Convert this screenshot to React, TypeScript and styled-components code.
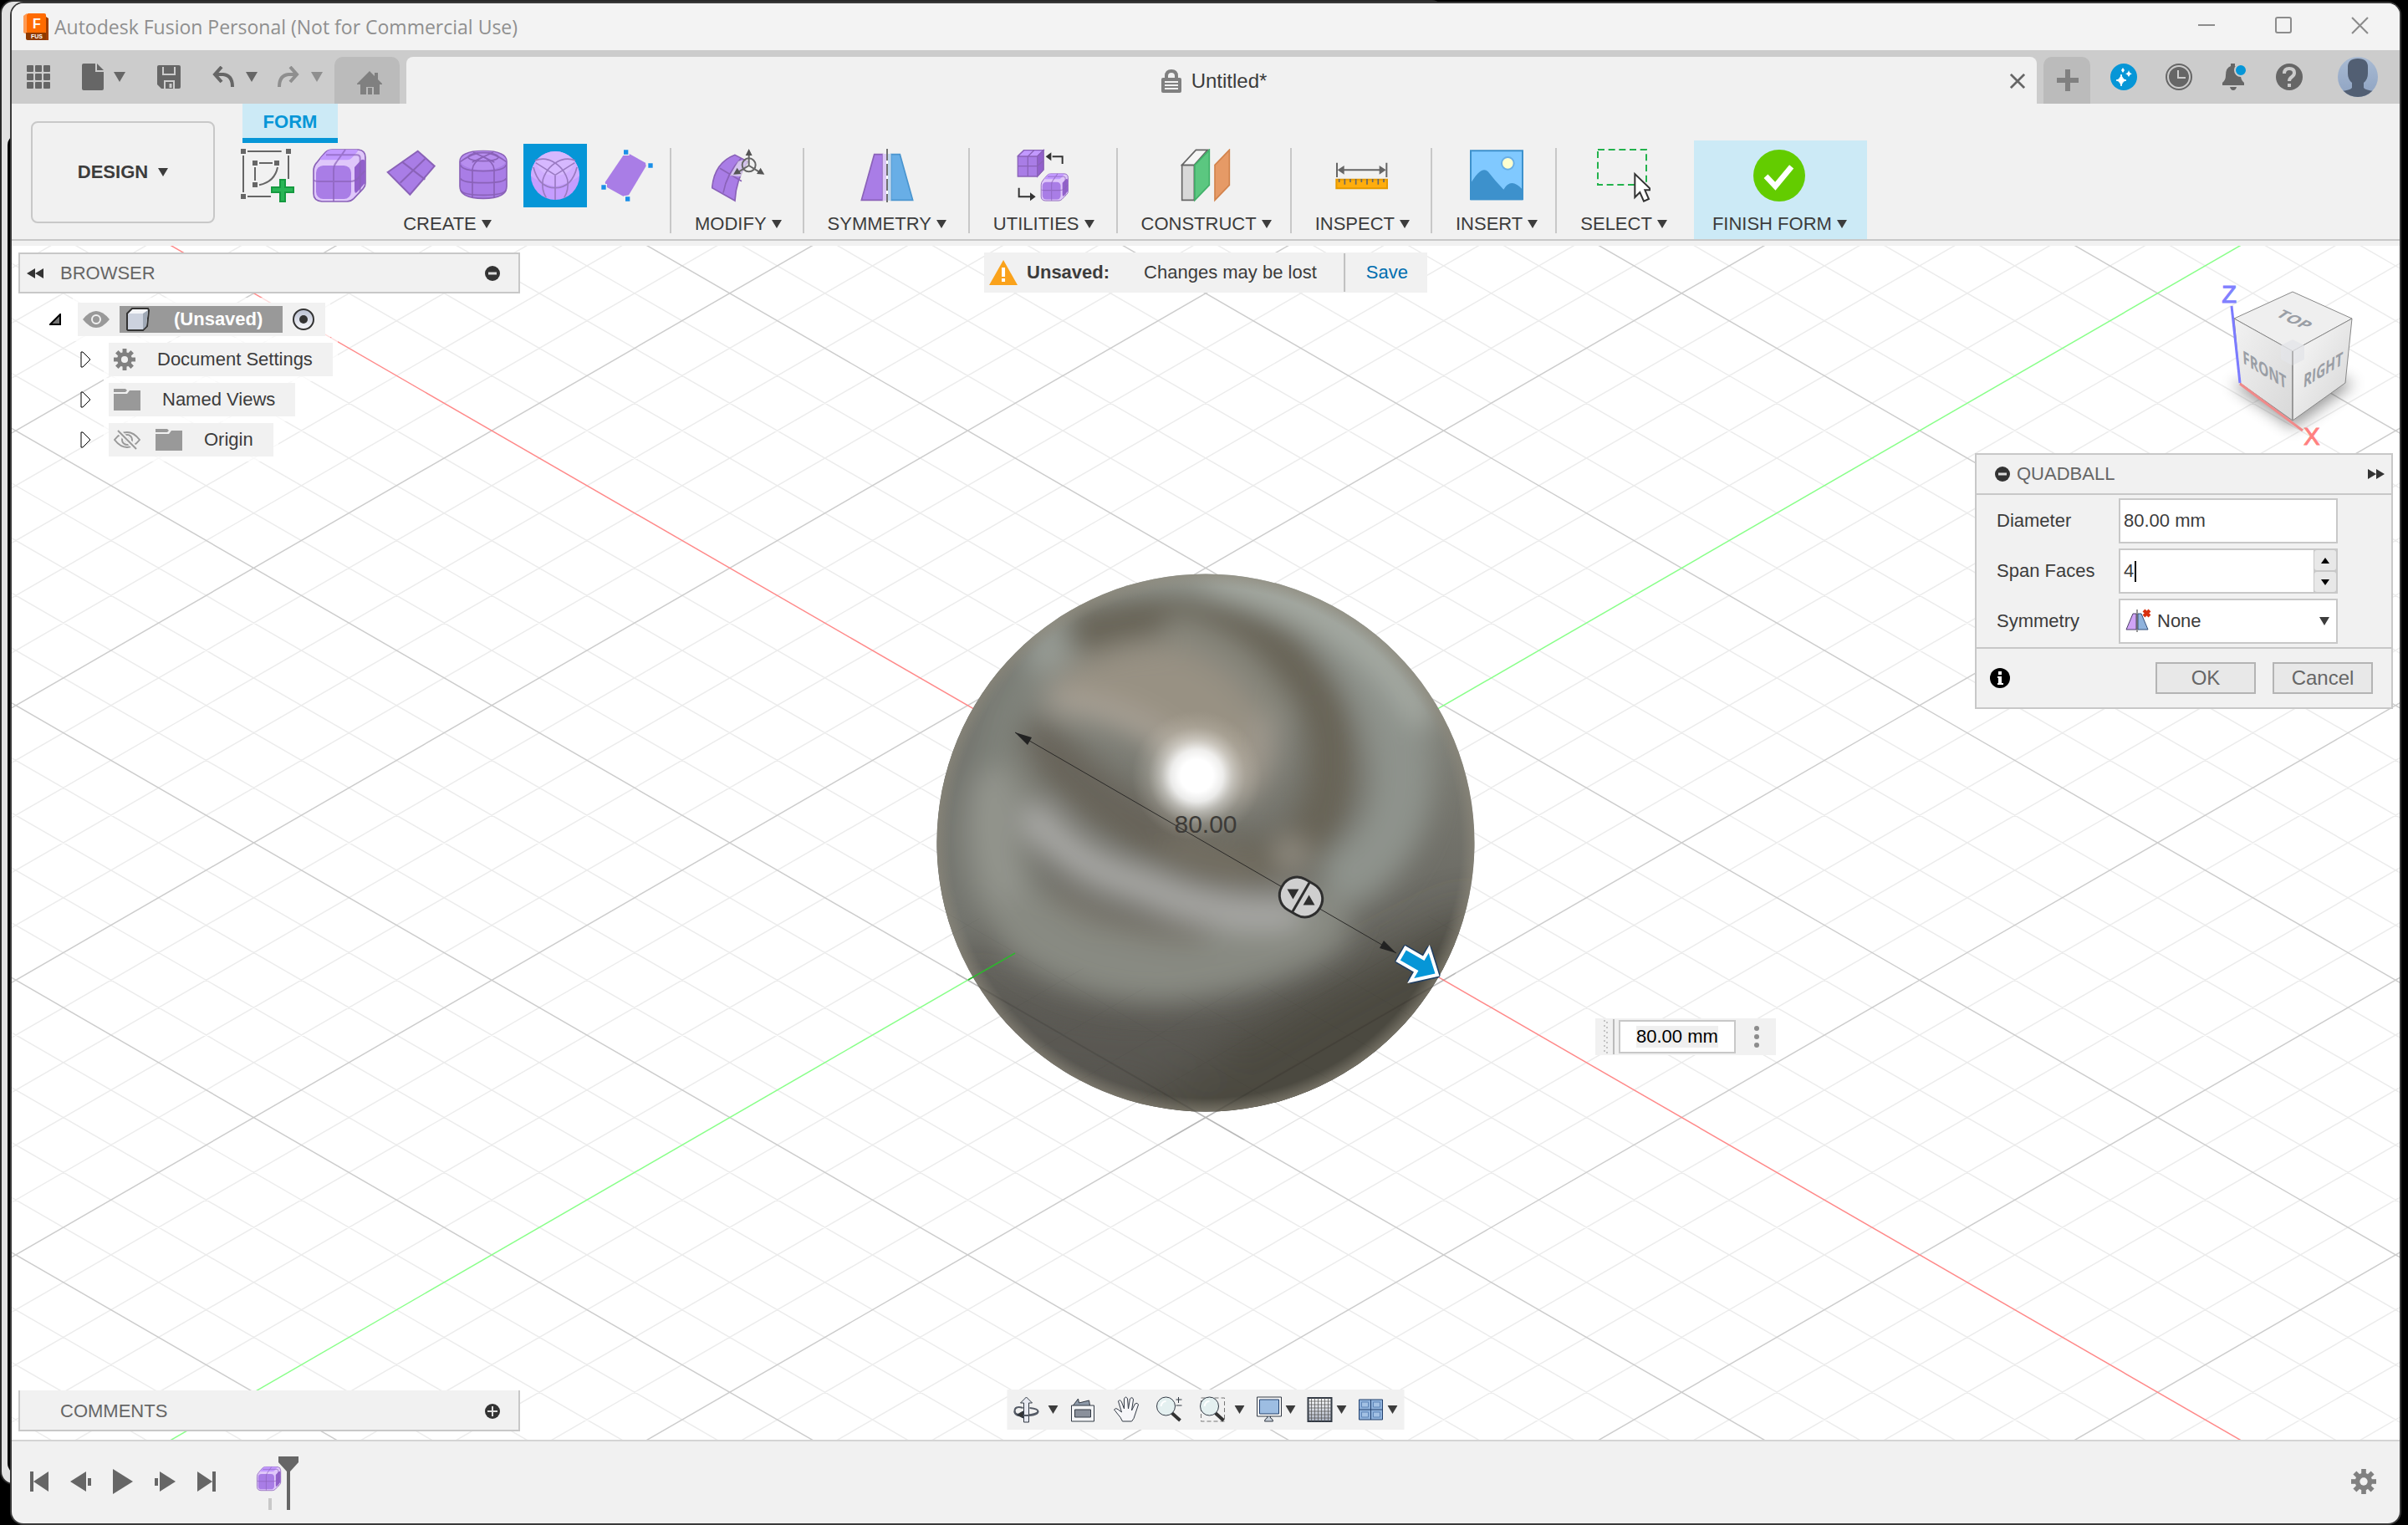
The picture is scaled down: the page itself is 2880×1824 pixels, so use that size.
import React from "react";
import styled, { createGlobalStyle, css } from "styled-components";

const GlobalStyle = createGlobalStyle`
  *, *::before, *::after { box-sizing: border-box; }
  body { margin: 0; background: #000; }
  body, button, input, select {
    font-family: "Liberation Sans", Arial, sans-serif;
    font-size: 22px;
    line-height: 28px;
    color: #3c3c3c;
  }
  button { border: 0; padding: 0; background: none; cursor: pointer; }
  svg { display: block; flex: none; }
`;

/* ---------- desktop and windows ---------- */

const Desktop = styled.div`
  position: relative;
  height: 100vh;
  padding: 4px 10px 2px 14px;
  background: #000;
  overflow: hidden;
`;

const BackWindow = styled.div`
  position: absolute;
  left: 0;
  top: 0;
  width: 60%;
  height: calc(100vh - 48px);
  background: #e2e2e2;
  border: 2px solid #2a2a2a;
  border-radius: 16px;
`;

const MiddleWindow = styled.div`
  position: absolute;
  left: 9px;
  top: 160px;
  width: 50%;
  height: calc(100vh - 220px);
  background: #000;
  border-radius: 14px;
`;

const Window = styled.div`
  position: relative;
  height: 100%;
  display: flex;
  flex-direction: column;
  background: #f1f1f1;
  border-radius: 14px;
  overflow: hidden;
  box-shadow: 0 0 0 2px #3a3a3a;
`;

const TitleBar = styled.header`
  height: 56px;
  display: flex;
  align-items: center;
  padding: 0 36px 0 14px;
  background: #f3f3f3;
  color: #8f8f8f;
`;

const TitleText = styled.h1`
  flex: 1;
  margin: 0 0 0 7px;
  font: 400 23px/32px "Open Sans", "Noto Sans", sans-serif;
`;

const WindowButtons = styled.div`
  display: flex;
  gap: 70px;
`;

const WindowButton = styled.button`
  width: 22px;
  height: 22px;
  margin-bottom: 4px;
  color: #8c8c8c;
`;

/* ---------- tab bar ---------- */

const TabBar = styled.div`
  height: 64px;
  display: flex;
  align-items: flex-end;
  background: #ccc;
  color: #666;
`;

const QuickActions = styled.div`
  align-self: stretch;
  display: flex;
  align-items: center;
  gap: 38px;
  padding: 0 14px 0 18px;
`;

const QuickButton = styled.button<{ $faded?: boolean }>`
  display: flex;
  align-items: center;
  gap: 12px;
  color: ${(p) => (p.$faded ? "#8f8f8f" : "#666")};
`;

const History = styled.div`
  display: flex;
  gap: 24px;

  ${QuickButton} {
    gap: 14px;
  }
`;

const StubTab = styled.button<{ $wide?: boolean }>`
  width: ${(p) => (p.$wide ? 78 : 56)}px;
  height: 56px;
  display: flex;
  align-items: center;
  justify-content: center;
  background: #bbb;
  border-radius: 10px 10px 0 0;
  color: #808080;
  padding: ${(p) => (p.$wide ? "6px 0 0 5px" : "0 0 0 2px")};
`;

const DocumentTab = styled.div`
  flex: 1;
  height: 56px;
  margin: 0 8px;
  padding: 2px 14px 0;
  display: flex;
  align-items: center;
  background: #f1f1f1;
  border-radius: 8px 8px 0 0;
`;

const DocumentName = styled.div`
  flex: 1;
  display: flex;
  align-items: center;
  justify-content: center;
  gap: 12px;
  font-size: 24px;
  color: #3c3c3c;
`;

const AccountBar = styled.div`
  align-self: stretch;
  display: flex;
  align-items: center;
  gap: 34px;
  padding: 0 26px 0 24px;
`;

const AccountButton = styled.button<{ $last?: boolean }>`
  margin-left: ${(p) => (p.$last ? 8 : 0)}px;
`;

/* ---------- ribbon ---------- */

const Ribbon = styled.div`
  height: 164px;
  display: flex;
  padding-left: 23px;
  border-bottom: 2px solid #c8c8c8;
`;

const WorkspaceButton = styled.button`
  width: 220px;
  height: 122px;
  margin: 21px 25px 0 0;
  display: flex;
  align-items: center;
  justify-content: center;
  gap: 12px;
  border: 2px solid #c8c8c8;
  border-radius: 8px;
  font-weight: 700;
`;

const RibbonBody = styled.div`
  display: flex;
  flex-direction: column;
`;

const RibbonTabs = styled.div`
  height: 44px;
  padding-left: 8px;
`;

const RibbonTab = styled.button`
  width: 114px;
  height: 47px;
  padding-top: 2px;
  background: #cceaf6;
  border-bottom: 6px solid #0696d7;
  color: #0696d7;
  font-weight: 700;
`;

const Groups = styled.div`
  flex: 1;
  display: flex;
`;

const Group = styled.section<{ $finish?: boolean; $end?: number }>`
  display: flex;
  flex-direction: column;
  align-items: center;
  padding: 4px ${(p) => p.$end ?? 26}px 0 28px;
  ${(p) =>
    p.$finish &&
    css`
      background: #cceaf6;
      padding: 4px 24px 0 22px;
    `}
`;

const CreateGroup = styled(Group)`
  padding: 4px 13px 0 0;
`;

const Tools = styled.div`
  display: flex;
  gap: 10px;
`;

const Tool = styled.button<{ $active?: boolean }>`
  width: 76px;
  height: 76px;
  display: flex;
  align-items: center;
  justify-content: center;
  background: ${(p) => (p.$active ? "#0696d7" : "transparent")};
`;

const GroupLabel = styled.button`
  display: flex;
  align-items: center;
  gap: 6px;
  margin-top: 6px;
  white-space: nowrap;
`;

const Divider = styled.div`
  width: 2px;
  height: 102px;
  margin-top: 9px;
  background: #c8c8c8;
`;

/* ---------- canvas ---------- */

const Canvas = styled.main`
  position: relative;
  flex: 1;
  margin-top: 6px;
  background: #fff;
  overflow: hidden;
`;

const Scene = styled.svg`
  position: absolute;
  inset: 0;
  width: 100%;
  height: 100%;
`;

const LeftDock = styled.div`
  position: absolute;
  left: 8px;
  top: 8px;
  bottom: 10px;
  width: 600px;
  display: flex;
  flex-direction: column;
  justify-content: space-between;
`;

const DockHeader = styled.div<{ $open?: boolean }>`
  height: 49px;
  display: flex;
  align-items: center;
  padding: ${(p) => (p.$open ? "0 21px 0 8px" : "2px 21px 0 8px")};
  gap: 20px;
  background: #f1f1f1;
  border: 2px solid #c8c8c8;
  border-width: ${(p) => (p.$open ? "2px" : "0 2px 2px 2px")};
  color: #666;
`;

const DockTitle = styled.h2`
  flex: 1;
  margin: 0;
  font-size: 22px;
  font-weight: 400;
`;

const Spacer = styled.span`
  width: 20px;
`;

const Tree = styled.ul`
  list-style: none;
  margin: 11px 0 0;
  padding: 0;
  display: flex;
  flex-direction: column;
  gap: 8px;
`;

const TreeRow = styled.li<{ $root?: boolean }>`
  display: flex;
  align-items: center;
  height: 40px;
  gap: 18px;
  padding-left: ${(p) => (p.$root ? 37 : 74)}px;
`;

const TreeToggle = styled.button`
  width: 16px;
  height: 24px;
`;

const TreeItem = styled.div<{ $root?: boolean }>`
  height: 40px;
  display: flex;
  align-items: center;
  gap: ${(p) => (p.$root ? 12 : 18)}px;
  padding: ${(p) => (p.$root ? "0 12px 0 6px" : "0 24px 0 6px")};
  background: #f1f1f1;
  box-shadow: 0 0 0 6px rgba(255, 255, 255, 0.7);
`;

const TreeLabel = styled.span`
  padding-left: 8px;
`;

const RootLabel = styled.span`
  height: 32px;
  display: flex;
  align-items: center;
  gap: 29px;
  padding: 0 24px 0 8px;
  background: #999;
  color: #fff;
  font-weight: 700;
`;

const Notice = styled.div`
  position: absolute;
  top: 8px;
  left: 50%;
  transform: translateX(-50%);
  height: 48px;
  display: flex;
  align-items: center;
  background: #f1f1f1;
  padding: 0 23px 0 6px;
  white-space: nowrap;
`;

const NoticeTitle = styled.strong`
  margin: 0 41px 0 11px;
`;

const NoticeLink = styled.a`
  height: 46px;
  line-height: 46px;
  margin-left: 32px;
  padding-left: 25px;
  border-left: 2px solid #c0c0c0;
  color: #006eaf;
  text-decoration: none;
`;

const CubeHolder = styled.div`
  position: absolute;
  right: 32px;
  top: 40px;
`;

/* ---------- feature dialog ---------- */

const Dialog = styled.form`
  position: absolute;
  right: 8px;
  top: 248px;
  width: 500px;
  background: #f1f1f1;
  border: 2px solid #c8c8c8;
`;

const DialogHeader = styled.div`
  height: 48px;
  display: flex;
  align-items: center;
  gap: 7px;
  padding: 0 8px 0 21px;
  border-bottom: 2px solid #c8c8c8;
  color: #666;
`;

const Fields = styled.div`
  display: grid;
  grid-template-columns: 146px 262px;
  row-gap: 6px;
  align-items: center;
  padding: 4px 0 4px 24px;
`;

const FieldBox = styled.div`
  position: relative;
  display: flex;
  height: 54px;
  background: #fff;
  border: 2px solid #c8c8c8;
`;

const TextField = styled.input`
  width: 100%;
  border: 0;
  padding: 0 0 0 4px;
  background: transparent;
  outline: 0;
`;

const TextCursor = styled.span`
  position: absolute;
  left: 17px;
  top: 13px;
  width: 2px;
  height: 25px;
  background: #000;
`;

const Stepper = styled.div`
  width: 27px;
  flex: none;
  display: flex;
  flex-direction: column;
  gap: 2px;
  background: #c8c8c8;
  border-left: 1px solid #c8c8c8;
`;

const StepButton = styled.button`
  flex: 1;
  display: flex;
  align-items: center;
  justify-content: center;
  background: #e8e8e8;
  border-radius: 3px;
  color: #000;
`;

const SelectField = styled.select`
  width: 100%;
  appearance: none;
  border: 0;
  padding: 0 0 0 44px;
  background: transparent;
  outline: 0;
`;

const SelectIcon = styled.span`
  position: absolute;
  left: 6px;
  top: 10px;
  pointer-events: none;
`;

const SelectCaret = styled.span`
  position: absolute;
  right: 8px;
  top: 20px;
  pointer-events: none;
`;

const DialogFooter = styled.div`
  height: 72px;
  display: flex;
  align-items: center;
  gap: 20px;
  padding: 0 22px 0 15px;
  border-top: 2px solid #c8c8c8;
`;

const DialogButton = styled.button`
  width: 120px;
  height: 38px;
  border: 2px solid #b4b4b4;
  background: #e8e8e8;
  font-size: 24px;
  line-height: 32px;
  color: #666;
`;

const Grow = styled.span`
  flex: 1;
`;

/* ---------- floating dimension input ---------- */

const DimensionBar = styled.div`
  position: absolute;
  left: calc(50% + 466px);
  top: calc(50% + 210px);
  height: 44px;
  display: flex;
  align-items: center;
  gap: 5px;
  padding: 0 20px 0 9px;
  background: #f1f1f1;
`;

const Rule = styled.span`
  width: 2px;
  height: 42px;
  background: #bbb;
`;

const DimensionBox = styled.div`
  width: 140px;
  height: 40px;
  display: flex;
  align-items: center;
  justify-content: center;
  margin-right: 17px;
  background: #fff;
  border: 2px solid #c8c8c8;
`;

const DimensionInput = styled.input`
  width: 98px;
  height: 26px;
  border: 0;
  padding: 0;
  background: #efefef;
  color: #000;
  outline: 0;
`;

/* ---------- bottom bars ---------- */

const NavBar = styled.nav`
  position: absolute;
  left: 50%;
  bottom: 12px;
  transform: translateX(-50%);
  height: 48px;
  display: flex;
  align-items: center;
  gap: 13px;
  padding: 0 8px 0 7px;
  background: #f1f1f1;
`;

const NavButton = styled.button<{ $plain?: boolean; $tight?: boolean }>`
  display: flex;
  align-items: center;
  gap: ${(p) => (p.$tight ? 4 : 10)}px;
  margin-right: ${(p) => (p.$plain ? 7 : 0)}px;
`;

const Timeline = styled.footer`
  height: 100px;
  display: flex;
  align-items: center;
  padding: 0 28px 2px 19px;
  border-top: 2px solid #d4d4d4;
  color: #666;
`;

const Transport = styled.div`
  display: flex;
  gap: 22px;
  margin-right: 42px;
`;

const TransportButton = styled.button`
  width: 28px;
  height: 36px;
  color: #666;
`;

/* ---------- small icons ---------- */

const Caret = ({ size = 12, color = "#3c3c3c" }: { size?: number; color?: string }) => (
  <svg width={size} height={size - 2} viewBox="0 0 12 10" preserveAspectRatio="none">
    <path d="M0 0h12l-6 10z" fill={color} />
  </svg>
);

const DoubleArrow = ({ flip }: { flip?: boolean }) => (
  <svg width="20" height="12" viewBox="0 0 20 12">
    <path
      d="M10 0v12L0 6zM20 0v12L10 6z"
      fill="#333"
      transform={flip ? "matrix(-1 0 0 1 20 0)" : undefined}
    />
  </svg>
);

const RoundSign = ({ plus }: { plus?: boolean }) => (
  <svg width="20" height="20" viewBox="0 0 20 20">
    <circle cx="10" cy="10" r="9" fill="#333" />
    <path d={plus ? "M4 10h12M10 4v12" : "M5 10h10"} stroke="#ddd" strokeWidth={plus ? 2 : 3} />
  </svg>
);

const AppLogo = () => (
  <svg width="30" height="32" viewBox="0 0 30 32">
    <path d="M0 3l4-3v25l-4-2z" fill="#ff9a52" />
    <rect x="4" width="23" height="24" rx="2" fill="#ff6b00" />
    <path d="M27 4l3 2v26H27z" fill="#a13f00" />
    <path d="M3 23h24v9H5q-2 0-2-2z" fill="#8f3a00" />
    <text x="16" y="18" textAnchor="middle" fontSize="16" fontWeight="700" fill="#fff">F</text>
    <text x="16" y="30" textAnchor="middle" fontSize="7" fontWeight="700" fill="#fff">FUS</text>
  </svg>
);

const AppsIcon = () => (
  <svg width="28" height="28" viewBox="0 0 28 28" fill="currentColor">
    {[0, 10, 20].map((y) =>
      [0, 10, 20].map((x) => <rect key={`${x}-${y}`} x={x} y={y} width="8" height="8" rx="1" />)
    )}
  </svg>
);

const FileIcon = () => (
  <svg width="26" height="32" viewBox="0 0 26 32" fill="currentColor">
    <path d="M2 0h14v10h10v20q0 2-2 2H2q-2 0-2-2V2q0-2 2-2z" />
    <path d="M18 0l8 8h-8z" />
  </svg>
);

const SaveIcon = () => (
  <svg width="28" height="28" viewBox="0 0 28 28">
    <path d="M2 0h24q2 0 2 2v24q0 2-2 2H5l-5-5V2q0-2 2-2z" fill="currentColor" />
    <path d="M7 2v9h14V2M9 28v-9h11v9" fill="none" stroke="#ccc" strokeWidth="2" />
    <path d="M16 22v5" stroke="#ccc" strokeWidth="3" />
  </svg>
);

const UndoIcon = ({ flip }: { flip?: boolean }) => (
  <svg width="26" height="26" viewBox="0 0 26 26">
    <g
      transform={flip ? "matrix(-1 0 0 1 26 0)" : undefined}
      fill="none"
      stroke="currentColor"
      strokeWidth="4"
    >
      <path d="M11 1L3 10l8 9" />
      <path d="M3 10h10q11 1 11 15" />
    </g>
  </svg>
);

const HomeIcon = () => (
  <svg width="30" height="28" viewBox="0 0 30 28" fill="currentColor">
    <path d="M15 0l6 6V2h4v8l5 5v1h-3v12h-7v-9h-9v9H4V16H0v-1z" />
    <path d="M13 20h5v8h-5z" />
  </svg>
);

const LockIcon = () => (
  <svg width="24" height="28" viewBox="0 0 24 28">
    <path d="M6 12V8q0-6 6-6t6 6v4" fill="none" stroke="#808080" strokeWidth="4" />
    <rect y="10" width="24" height="18" rx="2" fill="#808080" />
    <path d="M4 15h16M4 19h16M4 23h16" stroke="#f1f1f1" strokeWidth="2" />
  </svg>
);

const Cross = ({ size, width }: { size: number; width: number }) => (
  <svg width={size} height={size} viewBox="0 0 20 20">
    <path d="M1 1l18 18M19 1L1 19" stroke="currentColor" strokeWidth={width} />
  </svg>
);

const PlusIcon = () => (
  <svg width="26" height="26" viewBox="0 0 26 26">
    <path d="M13 0v26M0 13h26" stroke="currentColor" strokeWidth="6" />
  </svg>
);

const SparkleIcon = () => (
  <svg width="32" height="32" viewBox="0 0 32 32">
    <circle cx="16" cy="16" r="16" fill="#0696d7" />
    <path d="M13 13q1 6 6 7q-5 1-6 7q-1-6-6-7q5-1 6-7z" fill="#fff" stroke="#fff" />
    <path d="M22 8q1 4 4 4q-3 1-4 4q-1-3-4-4q3 0 4-4zM15 5l2 3-2 3-2-3z" fill="#fff" />
  </svg>
);

const ClockIcon = () => (
  <svg width="32" height="32" viewBox="0 0 32 32">
    <circle cx="16" cy="16" r="15" fill="none" stroke="#666" strokeWidth="2" />
    <circle cx="16" cy="16" r="12" fill="#666" />
    <path d="M15 8v9h9" fill="none" stroke="#ccc" strokeWidth="2" />
  </svg>
);

const BellIcon = () => (
  <svg width="32" height="32" viewBox="0 0 32 32">
    <path d="M12 0h5v3q7 2 7 11 0 6 4 9v3H2v-3q4-3 4-9 0-9 6-11zM11 28h8q-1 4-4 4t-4-4z" fill="#666" />
    <circle cx="24" cy="8" r="7" fill="#0696d7" stroke="#ccc" strokeWidth="2" />
  </svg>
);

const HelpIcon = () => (
  <svg width="32" height="32" viewBox="0 0 32 32">
    <circle cx="16" cy="16" r="16" fill="#666" />
    <path d="M10 12q0-6 6-6t6 5q0 3-3 5t-3 5" fill="none" stroke="#ccc" strokeWidth="4" />
    <path d="M14 24h4v4h-4z" fill="#ccc" />
  </svg>
);

const Avatar = () => (
  <svg width="48" height="48" viewBox="0 0 48 48">
    <defs>
      <linearGradient id="sky" x2="0" y2="1">
        <stop stopColor="#a9bbd3" />
        <stop offset="1" stopColor="#8ea3c2" />
      </linearGradient>
      <clipPath id="face"><circle cx="24" cy="24" r="24" /></clipPath>
    </defs>
    <g clipPath="url(#face)">
      <path d="M0 0h48v48H0z" fill="url(#sky)" />
      <path d="M12 12Q12 2 24 2t12 10v8q0 7-5 11v6q2 3 14 4v8H3v-8q12-1 14-4v-6q-5-4-5-11z" fill="#525f73" />
    </g>
  </svg>
);

/* ---------- ribbon icons, drawn on a 192 unit square ---------- */

const BigIcon = ({ children }: { children: React.ReactNode }) => (
  <svg width="64" height="64" viewBox="0 0 192 192">{children}</svg>
);

const SketchIcon = () => (
  <BigIcon>
    <g fill="none" stroke="#666" strokeWidth="6">
      <path d="M24 9h122M9 24v132M24 171h84M171 24v84M66 51h48M51 66v48" />
      <path d="M66 130Q122 118 132 66" />
    </g>
    <g fill="#666">
      <path d="M0 0h18v18H0zM162 0h18v18h-18zM0 162h18v18H0zM42 42h18v18H42zM120 42h18v18h-18zM42 120h18v18H42z" />
    </g>
    <path d="M141 111h18v27h30v18h-30v33h-18v-33h-30v-18h30z" fill="#29b555" stroke="#159a40" strokeWidth="6" />
  </BigIcon>
);

const RoundedBoxDrawing = () => (
  <>
    <path d="M30 30L46 12Q56 3 70 3h94q25 2 25 28v92q0 12-8 20l-34 36q-10 10-24 10H33Q3 187 3 160V80Q3 62 14 50z" fill="#dfc7fa" stroke="#8a62b8" strokeWidth="5" />
    <rect x="12" y="60" width="126" height="120" rx="26" fill="#a97de6" />
    <path d="M28 34L52 8q4-5 14-5h92q6 2 2 8l-20 22q-6 7-16 7H34q-8 0-6-6z" fill="#c299ff" />
    <path d="M150 66l24-26q14-6 14 12v70l-26 30q-12 16-12-8z" fill="#9260cc" />
    <path d="M3 112q5 5 20 5h110q20 0 30-12l24-26M75 189V78q0-18 10-30l32-45M48 22h110q12 0 12 12v122" fill="none" stroke="#8a62b8" strokeWidth="6" opacity=".7" />
  </>
);

const BoxIcon = () => (
  <BigIcon>
    <RoundedBoxDrawing />
  </BigIcon>
);

const PlaneIcon = () => (
  <BigIcon>
    <g stroke="#8a62b8" strokeWidth="6">
      <path d="M11 84L119 8l60 54-88 102z" fill="#a97de6" />
      <path d="M56 122l89-86M62 46l83 64" fill="none" />
    </g>
  </BigIcon>
);

const CylinderIcon = () => (
  <BigIcon>
    <path d="M12 46Q12 8 96 8t84 38v88q0 44-84 44T12 134z" fill="#a97de6" stroke="#8a62b8" strokeWidth="5" />
    <ellipse cx="96" cy="42" rx="82" ry="34" fill="#b78eef" />
    <g fill="none" stroke="#8a62b8" strokeWidth="5">
      <path d="M14 58Q20 80 96 80t82-22M14 106Q20 122 96 122t82-16M14 148q10 18 82 18t82-18" />
      <path d="M57 176V74q2-26 39-46q37 20 39 46v102" />
      <path d="M40 30q10-16 56-16t56 16q-10 14-56 14T40 30zM60 12l76 36M132 12L56 48" />
      <path d="M14 46q26-20 60-30M178 46q-26-20-60-30" />
    </g>
  </BigIcon>
);

const QuadballIcon = () => (
  <BigIcon>
    <circle cx="96" cy="96" r="87" fill="#c59dff" />
    <path d="M9 96a87 87 0 0 1 174 0q-20 22-87 40Q29 118 9 96z" fill="#d0adff" />
    <path d="M26 46Q56 10 96 9t70 37q-14 50-70 50T26 46z" fill="#dabfff" opacity=".6" />
    <g fill="none" stroke="#9a7bc2" strokeWidth="5">
      <path d="M96 96v87M96 94L26 50M96 94l70-44" />
      <path d="M24 42q24-10 50-2q50 20 66 70 6 38-12 66" />
      <path d="M168 42q-24-10-50-2q-50 20-66 70-6 38 12 66" />
      <path d="M18 66q18 74 78 74t78-74" />
    </g>
  </BigIcon>
);

const FaceIcon = () => (
  <BigIcon>
    <path d="M86 18l14-2 62 34 2 12-62 104-20 4-62-34-3-16z" fill="#a97de6" />
    <g fill="#1a8fe8" stroke="#f1f1f1" strokeWidth="4">
      <path d="M82 2h20v20H82zM170 50h20v20h-20zM2 128h20v20H2zM88 170h20v20H88z" />
    </g>
  </BigIcon>
);

const ModifyIcon = () => (
  <BigIcon>
    <g fill="#a97de6" stroke="#8a62b8" strokeWidth="5">
      <path d="M2 140Q10 50 84 22l46 24Q88 110 84 186z" />
      <path d="M30 70l78 46M42 158Q54 90 106 34" fill="none" />
    </g>
    <path d="M66 96L96 44l36-8 52 60-80 4z" fill="#f1f1f1" opacity=".6" />
    <g fill="none" stroke="#666" strokeWidth="6">
      <ellipse cx="134" cy="58" rx="24" ry="24" />
      <path d="M134 20v40M134 60l-36 22M134 60l36 22" />
    </g>
    <path d="M134 0l12 24h-24zM78 92l14-24 14 22zM190 92l-14-24-14 22z" fill="#555" />
  </BigIcon>
);

const SymmetryIcon = () => (
  <BigIcon>
    <path d="M50 20h30v164H4z" fill="#a97de6" stroke="#8a62b8" strokeWidth="5" />
    <path d="M110 20h32l46 164h-78z" fill="#68aee6" stroke="#4a95cf" strokeWidth="5" />
    <path d="M80 18h16v168H80z" fill="#dcc8f5" />
    <path d="M96 18h14v168H96z" fill="#c0d6ec" />
    <path d="M96 0v192" stroke="#fff" strokeWidth="6" />
    <path d="M96 0v192" stroke="#555" strokeWidth="5" strokeDasharray="42 12" />
  </BigIcon>
);

const UtilitiesIcon = () => (
  <BigIcon>
    <g stroke="#8a62b8" strokeWidth="4">
      <path d="M4 26L26 5h70v70L74 99H4z" fill="#a97de6" />
      <path d="M4 26L26 5h70L74 27H4z" fill="#c299ff" />
      <path d="M74 27L96 5v70L74 99z" fill="#9260cc" />
      <path d="M4 62h70l22-20M40 99V27l22-22" fill="none" />
    </g>
    <g transform="translate(86 88) scale(.52)">
      <RoundedBoxDrawing />
    </g>
    <path d="M164 54V28h-36M8 140v32h40" fill="none" stroke="#333" strokeWidth="6" />
    <path d="M104 28l20-15v30zM68 172l-20-15v30z" fill="#333" />
  </BigIcon>
);

const ConstructIcon = () => (
  <BigIcon>
    <path d="M8 58h44v126H8z" fill="#d8d8d8" stroke="#666" strokeWidth="5" />
    <path d="M8 58L58 4h42L52 58z" fill="#f6f6f6" stroke="#666" strokeWidth="5" />
    <path d="M54 58l52-54v126l-52 54z" fill="#5bc780" stroke="#41b069" strokeWidth="5" />
    <path d="M126 58l52-54v126l-52 54z" fill="#e69a66" stroke="#d2834c" strokeWidth="5" />
  </BigIcon>
);

const InspectIcon = () => (
  <BigIcon>
    <path d="M6 50v52M184 50v52M20 76h150" stroke="#666" strokeWidth="6" fill="none" />
    <path d="M8 76l24-16v32zM182 76l-24-16v32z" fill="#666" />
    <path d="M4 110h182v32H4z" fill="#ffad0d" stroke="#e69a00" strokeWidth="6" />
    <path d="M14 108v12M34 108v20M54 108v12M74 108v20M94 108v12M114 108v20M134 108v12M154 108v20M174 108v12" stroke="#666" strokeWidth="5" />
  </BigIcon>
);

const InsertIcon = () => (
  <BigIcon>
    <path d="M3 7h186v174H3z" fill="#80c9ff" stroke="#3d91cc" strokeWidth="6" />
    <path d="M3 124q40-68 64-40 24 32 54 62 26-46 68 0v38H3z" fill="#3d91cc" />
    <circle cx="136" cy="52" r="22" fill="#ffffcf" stroke="#68aee6" strokeWidth="6" />
  </BigIcon>
);

const SelectIconBig = () => (
  <BigIcon>
    <path d="M3 3h174v126H3z" fill="none" stroke="#22b24c" strokeWidth="6" strokeDasharray="24 14" />
    <path d="M136 90v84l18-18 14 32 18-8-14-32h24z" fill="#fff" stroke="#333" strokeWidth="6" />
  </BigIcon>
);

const FinishIcon = () => (
  <BigIcon>
    <circle cx="96" cy="96" r="93" fill="#63cc00" />
    <path d="M48 98l34 36 58-70" fill="none" stroke="#fff" strokeWidth="20" />
  </BigIcon>
);

/* ---------- tree icons ---------- */

const Gear = ({ size }: { size: number }) => (
  <svg width={size} height={size} viewBox="-16 -16 32 32">
    <g fill="#808080">
      {[0, 45, 90, 135].map((a) => (
        <rect key={a} x="-3" y="-16" width="6" height="32" transform={`rotate(${a})`} />
      ))}
      <circle r="11" />
    </g>
    <circle r="5" fill="#f1f1f1" />
  </svg>
);

const Folder = () => (
  <svg width="32" height="26" viewBox="0 0 32 26" fill="#999">
    <path d="M0 0h14l2 2-2 2H0z" />
    <path d="M0 6h16l3-4h13v24H0z" />
  </svg>
);

const Eye = ({ hidden }: { hidden?: boolean }) => (
  <svg width="32" height="24" viewBox="0 0 32 24">
    {hidden ? (
      <g fill="none" stroke="#999" strokeWidth="2">
        <path d="M1 12Q8 3 16 3t15 9q-7 9-15 9T1 12z" />
        <circle cx="16" cy="12" r="6" />
        <circle cx="16" cy="12" r="2" />
        <path d="M5 1l22 22" stroke="#f1f1f1" strokeWidth="6" />
        <path d="M5 1l22 22" />
      </g>
    ) : (
      <>
        <path d="M0 12Q8 2 16 2t16 10q-8 10-16 10T0 12z" fill="#999" />
        <circle cx="16" cy="12" r="5" fill="none" stroke="#f1f1f1" strokeWidth="2" />
      </>
    )}
  </svg>
);

const BodyIcon = () => (
  <svg width="28" height="28" viewBox="0 0 28 28" stroke="#333" strokeWidth="1">
    <path d="M1 7l6-6h19l1 2-2 19-5 5H2l-1-1z" fill="#f4f5f8" strokeWidth="2" />
    <path d="M2 7h18v19H2z" fill="#ccd2de" stroke="none" />
    <path d="M20 7l6-4-2 19-4 4z" fill="#9fa8b5" stroke="none" />
  </svg>
);

const RadioIcon = () => (
  <svg width="27" height="27" viewBox="0 0 27 27">
    <defs>
      <linearGradient id="knob" x2="0" y2="1">
        <stop stopColor="#b9c0d2" />
        <stop offset="1" stopColor="#f8f8fb" />
      </linearGradient>
    </defs>
    <circle cx="13" cy="13" r="12" fill="url(#knob)" stroke="#333" strokeWidth="2" />
    <circle cx="13" cy="13" r="5" fill="#333" />
  </svg>
);

const OpenMark = () => (
  <svg width="14" height="14" viewBox="0 0 14 14">
    <path d="M1 13L13 1v12z" fill="#777" stroke="#000" strokeWidth="2" />
  </svg>
);

const ClosedMark = () => (
  <svg width="14" height="20" viewBox="0 0 14 20">
    <path d="M1 1h2l9 9-9 9H1z" fill="#fff" stroke="#000" strokeWidth="1" />
  </svg>
);

const WarningIcon = () => (
  <svg width="34" height="30" viewBox="0 0 34 30">
    <path d="M17 0l17 30H0z" fill="#faa21b" />
    <path d="M17 9v11M17 22v4" stroke="#fff" strokeWidth="4" />
  </svg>
);

/* ---------- dialog icons ---------- */

const NoSymmetryIcon = () => (
  <svg width="32" height="30" viewBox="0 0 32 30">
    <path d="M9 6h4v19H1z" fill="#cfa3f5" stroke="#4a3f66" strokeWidth="1" />
    <path d="M15 6h4l8 19H15z" fill="#8fb2dc" stroke="#35507a" strokeWidth="1" />
    <path d="M14 1v27" stroke="#333" strokeWidth="1" />
    <path d="M22 2l7 7M29 2l-7 7" stroke="#d9300f" strokeWidth="4" />
  </svg>
);

const InfoIcon = () => (
  <svg width="26" height="26" viewBox="0 0 26 26">
    <circle cx="13" cy="13" r="12" fill="#000" />
    <path d="M11 5h4v4h-4zM10 11h5v8h2v2h-7v-2h1v-6h-1z" fill="#fff" />
  </svg>
);

const GripIcon = () => (
  <svg width="7" height="40" viewBox="0 0 7 40" fill="#c4c4c4">
    {[0, 6, 12, 18, 24, 30, 36].map((y) => (
      <path key={y} d={`M1 ${y}h2v2H1zM4 ${y + 2}h2v2H4z`} />
    ))}
  </svg>
);

const MoreIcon = () => (
  <svg width="6" height="28" viewBox="0 0 6 28" fill="#8c8c8c">
    <circle cx="3" cy="4" r="3" />
    <circle cx="3" cy="14" r="3" />
    <circle cx="3" cy="24" r="3" />
  </svg>
);

/* ---------- navigation bar icons, 32 unit square ---------- */

const NavIcon = ({ children }: { children: React.ReactNode }) => (
  <svg width="32" height="32" viewBox="0 0 32 32" fill="none" stroke="#333a45" strokeWidth="1">
    {children}
  </svg>
);

const OrbitIcon = () => (
  <NavIcon>
    <path d="M20 14Q30 15 30 18t-14 5T2 18t10-4" strokeWidth="2" stroke="#555b66" />
    <path d="M13 31V8h-4l7-7 7 7h-4v23z" fill="#e8eaf2" />
    <path d="M2 18q0 5 14 5t14-5" strokeWidth="2" stroke="#555b66" />
    <path d="M5 22l7-4v8z" fill="#333" />
  </NavIcon>
);

const LookAtIcon = () => (
  <NavIcon>
    <path d="M5 11l6-8 1 5 12-3 1 6" fill="#8d99a8" />
    <path d="M3 11h27v19H3z" fill="#f4f5f7" />
    <path d="M7 16h19v9H7z" fill="#8a909b" />
  </NavIcon>
);

const PanIcon = () => (
  <NavIcon>
    <path
      d="M12 30q-2-5-6-9-3-4-4-5 2-3 5 0l4 3-4-13q2-3 4 1l3 8 0-12q2-4 4 0l1 12 2-12q3-3 4 1l-2 13 4-8q3-2 4 1l-4 12q-1 5-4 8z"
      fill="#f6f6f9"
    />
  </NavIcon>
);

const Magnifier = () => (
  <>
    <path d="M19 20l10 9" stroke="#333" strokeWidth="4" />
    <circle cx="12" cy="12" r="11" fill="#e4f0f0" />
    <path d="M6 12q1-6 6-6" stroke="#fff" strokeWidth="2" />
  </>
);

const ZoomIcon = () => (
  <NavIcon>
    <Magnifier />
    <path d="M27 1v7M24 4h7M24 11h7" />
  </NavIcon>
);

const FitIcon = () => (
  <NavIcon>
    <path d="M2 2h28v28H2z" strokeDasharray="5 3" stroke="#777" />
    <Magnifier />
  </NavIcon>
);

const DisplayIcon = () => (
  <NavIcon>
    <path d="M11 30q0-3 3-4v-3h4v3q3 1 3 4z" fill="#c8d0da" />
    <path d="M2 1h29v23H2z" fill="#f6f6f6" />
    <path d="M5 4h23v17H5z" fill="#9dbde2" stroke="#24426f" />
  </NavIcon>
);

const GridIcon = () => (
  <NavIcon>
    <defs>
      <linearGradient id="sheet" x2="0" y2="1">
        <stop stopColor="#fff" />
        <stop offset="1" stopColor="#a9b0c0" />
      </linearGradient>
    </defs>
    <path d="M2 2h28v28H2z" fill="url(#sheet)" strokeWidth="2" />
    <path d="M6 2v28M10 2v28M14 2v28M18 2v28M22 2v28M26 2v28M2 6h28M2 10h28M2 14h28M2 18h28M2 22h28M2 26h28" stroke="#555" opacity=".75" />
  </NavIcon>
);

const ViewportsIcon = () => (
  <NavIcon>
    <path d="M2 4h28v24H2z" fill="#8fb2dc" stroke="#24426f" />
    <path d="M16 4v24M2 16h28" stroke="#24426f" />
    <path d="M5 7h8v6H5zM19 7h8v6h-8zM5 19h8v6H5zM19 19h8v6h-8z" stroke="#5f86b8" fill="#a3c1e4" />
  </NavIcon>
);

/* ---------- view cube ---------- */

const ViewCube = () => (
  <svg width="190" height="210" viewBox="0 0 190 210">
    <defs>
      <linearGradient id="leftFace" x2="1" y2="1">
        <stop stopColor="#f2f2f2" />
        <stop offset="1" stopColor="#d8d8d8" />
      </linearGradient>
      <linearGradient id="rightFace" x2="1" y2="1">
        <stop stopColor="#fafafa" />
        <stop offset="1" stopColor="#d4d4d4" />
      </linearGradient>
      <filter id="shade" x="-50%" y="-50%" width="200%" height="200%">
        <feGaussianBlur stdDeviation="9" />
      </filter>
    </defs>
    <path d="M20 125L94 178l74-54-30-10z" fill="#000" opacity=".4" filter="url(#shade)" />
    <path d="M94 15l71 32-71 39-70-39z" fill="#efefef" stroke="#888" strokeWidth="1" />
    <path d="M24 47l70 39v83l-63-45z" fill="url(#leftFace)" stroke="#888" strokeWidth="1" />
    <path d="M165 47L94 86v83l63-45z" fill="url(#rightFace)" stroke="#888" strokeWidth="1" />
    <path d="M94 72l14 7v17l-14 7-14-7V79z" fill="#e3e5e8" opacity=".8" />
    <path d="M94 86v83" stroke="#888" strokeWidth="1" />
    <path d="M21 32l10 92" stroke="#7b7bff" strokeWidth="3" />
    <path d="M31 125l75 56" stroke="#f08a8a" strokeWidth="3" />
    <g fontFamily="Open Sans, Noto Sans, sans-serif" fontWeight="700" fill="#9a9ea5">
      <text transform="matrix(.87 .4 -.7 .5 91 52)" textAnchor="middle" fontSize="21">TOP</text>
      <text transform="matrix(.7 .42 .06 1 61 116)" textAnchor="middle" fontSize="22">FRONT</text>
      <text transform="matrix(.7 -.42 -.06 1 130 116)" textAnchor="middle" fontSize="22">RIGHT</text>
    </g>
    <g fontSize="29" textAnchor="middle" strokeWidth="1">
      <text x="18" y="28" fill="#8080ff" stroke="#8080ff">Z</text>
      <text x="117" y="198" fill="#ff8080" stroke="#ff8080">X</text>
    </g>
  </svg>
);

/* ---------- 3D scene, origin at the middle of the canvas ---------- */

const SceneDefs = () => (
  <defs>
    <linearGradient id="base" x2="0" y2="1">
      <stop stopColor="#91948c" />
      <stop offset=".15" stopColor="#8b8d85" />
      <stop offset=".4" stopColor="#77776f" />
      <stop offset=".7" stopColor="#64635d" />
      <stop offset=".85" stopColor="#56544e" />
      <stop offset="1" stopColor="#5a564e" />
    </linearGradient>
    <radialGradient id="rim">
      <stop offset=".95" stopColor="#8f8a7c" stopOpacity="0" />
      <stop offset="1" stopColor="#8f8a7c" stopOpacity=".6" />
    </radialGradient>
    <radialGradient id="spot">
      <stop offset="0" stopColor="#fff" />
      <stop offset=".25" stopColor="#fff" />
      <stop offset=".4" stopColor="#fff" stopOpacity=".85" />
      <stop offset=".55" stopColor="#fbf9f5" stopOpacity=".5" />
      <stop offset=".75" stopColor="#efe9df" stopOpacity=".18" />
      <stop offset="1" stopColor="#e0d8ca" stopOpacity="0" />
    </radialGradient>
    <filter id="soft" x="-30%" y="-30%" width="160%" height="160%">
      <feGaussianBlur stdDeviation="36" />
    </filter>
    <filter id="softer" x="-50%" y="-50%" width="200%" height="200%">
      <feGaussianBlur stdDeviation="60" />
    </filter>
    <clipPath id="ball">
      <circle cx="788" cy="780" r="702" />
    </clipPath>
    <clipPath id="lowerBall">
      <path d="M-321 62Q-100 190 0 180T321 62A322 322 0 0 1-321 62z" />
    </clipPath>
  </defs>
);

const MINOR = 65.72;

const gridLines = (from: number, to: number, major: boolean) => {
  let d = "";
  for (let k = from; k <= to; k++) {
    if (k === 0 || (k % 5 === 0) !== major) continue;
    const y = k * MINOR;
    d += `M-4000 ${y - 2309}L4000 ${y + 2309}M-4000 ${y + 2309}L4000 ${y - 2309}`;
  }
  return d;
};

const Grid = () => (
  <g fill="none">
    <path d={gridLines(-60, 60, false)} stroke="#ececec" strokeWidth="1.5" />
    <path d={gridLines(-60, 60, true)} stroke="#cdcdcd" strokeWidth="1.5" />
  </g>
);

const Sphere = () => (
  <g transform="scale(.458) translate(-788 -780)">
    <g clipPath="url(#ball)" fill="none" strokeLinecap="round">
      <path d="M0 0h1600v1600H0z" fill="url(#base)" />
      <g filter="url(#softer)">
        <path d="M500 1560Q800 1300 1500 950L1600 1600H600z" fill="#4b4841" />
        <path d="M180 1230Q420 1340 760 1320" stroke="#5a5953" strokeWidth="120" />
      </g>
      <g filter="url(#soft)">
        <path d="M120 1000Q60 500 300 270" stroke="#73756e" strokeWidth="130" />
        <path d="M235 680Q220 460 340 320" stroke="#7f827a" strokeWidth="90" />
        <path d="M360 290Q540 130 760 110Q1020 100 1200 260" stroke="#999e97" strokeWidth="90" />
        <path d="M1140 220Q1290 380 1300 570Q1310 760 1170 860" stroke="#8e938c" strokeWidth="160" />
        <path d="M820 100Q1180 150 1350 440" stroke="#a8ada6" strokeWidth="70" />
        <path d="M250 660Q200 850 330 1000Q480 1120 700 1110Q950 1080 1080 990" stroke="#888a82" strokeWidth="170" />
        <path d="M235 620Q210 760 270 900" stroke="#969891" strokeWidth="60" />
        <path d="M350 720Q440 840 620 890Q820 980 1000 960" stroke="#a8a8a5" strokeWidth="90" />
        <path d="M400 920Q560 1015 760 1020" stroke="#7a776d" strokeWidth="50" />
        <path d="M480 225Q680 150 860 215Q1060 300 1105 470Q1140 660 1050 780Q950 850 820 830Q620 780 400 560" stroke="#686357" strokeWidth="120" />
        <path d="M380 430Q360 310 620 265Q860 255 960 420Q1000 560 880 610L720 570Q560 450 380 430z" fill="#989183" />
        <path d="M720 230Q900 290 960 430" stroke="#87867b" strokeWidth="90" />
        <path d="M400 410Q580 430 700 530" stroke="#aca499" strokeWidth="50" />
        <path d="M930 480Q960 570 880 650" stroke="#a09a8f" strokeWidth="60" />
        <path d="M350 500Q470 640 720 770" stroke="#68645a" strokeWidth="90" />
        <path d="M700 790L900 850" stroke="#767165" strokeWidth="60" />
        <circle cx="1010" cy="810" r="46" fill="#928d82" />
      </g>
      <circle cx="765" cy="605" r="170" fill="url(#spot)" />
      <circle cx="788" cy="780" r="702" fill="url(#rim)" />
    </g>
  </g>
);

const DiameterMark = () => (
  <>
    <path d="M-228-132L228 132" stroke="#2b2a28" strokeWidth="1" />
    <path d="M-228-132l20 6-5 9zM228 132l-20-6 5-9z" fill="#222" />
    <text x="0" y="-12" textAnchor="middle" fontSize="30" fill="#3d3b38">80.00</text>
    <g transform="translate(114 65) rotate(30)">
      <rect x="-26" y="-21" width="52" height="42" rx="20" fill="#cfcfcf" stroke="#2e2e2e" strokeWidth="3" />
      <path d="M0-20v40" stroke="#2e2e2e" strokeWidth="3" />
      <path d="M-7-7v14l-12-7zM7-7v14l12-7z" fill="#2e2e2e" />
    </g>
    <g transform="translate(277 158) rotate(30)">
      <path d="M0 0L-24-22v13h-25v18h25v13z" fill="#0696d7" stroke="#1d3d63" strokeWidth="7" strokeLinejoin="round" />
      <path d="M0 0L-24-22v13h-25v18h25v13z" fill="#0696d7" stroke="#fff" strokeWidth="4" />
    </g>
  </>
);

const ModelScene = () => (
  <Scene role="img" aria-label="Quadball preview">
    <SceneDefs />
    <svg x="50%" y="50%" overflow="visible">
      <Grid />
      <path d="M-4000-2309L4000 2309" stroke="#ff8a8a" strokeWidth="1.5" />
      <path d="M-4000 2309L4000-2309" stroke="#8aff8a" strokeWidth="1.5" />
      <Sphere />
      <g clipPath="url(#lowerBall)" fill="none" opacity=".1">
        <path d={gridLines(-20, 20, true)} stroke="#000" strokeWidth="2" />
        <path d={gridLines(-20, 20, false)} stroke="#000" strokeWidth="1" opacity=".3" />
      </g>
      <path d="M-284 164L-228 132" stroke="#2fb52f" strokeWidth="1.5" />
      <DiameterMark />
    </svg>
  </Scene>
);

/* ---------- data ---------- */

const createTools = [
  { name: "Create Sketch", icon: <SketchIcon /> },
  { name: "Box", icon: <BoxIcon /> },
  { name: "Plane", icon: <PlaneIcon /> },
  { name: "Cylinder", icon: <CylinderIcon /> },
  { name: "Quadball", icon: <QuadballIcon />, active: true },
  { name: "Face", icon: <FaceIcon /> },
];

const groups = [
  { name: "MODIFY", icon: <ModifyIcon />, end: 25 },
  { name: "SYMMETRY", icon: <SymmetryIcon /> },
  { name: "UTILITIES", icon: <UtilitiesIcon /> },
  { name: "CONSTRUCT", icon: <ConstructIcon />, end: 22 },
  { name: "INSPECT", icon: <InspectIcon />, end: 25 },
  { name: "INSERT", icon: <InsertIcon />, end: 21 },
  { name: "SELECT", icon: <SelectIconBig />, end: 32 },
];

const navTools = [
  { name: "Orbit", icon: <OrbitIcon />, menu: true },
  { name: "Look At", icon: <LookAtIcon /> },
  { name: "Pan", icon: <PanIcon /> },
  { name: "Zoom", icon: <ZoomIcon /> },
  { name: "Fit", icon: <FitIcon />, menu: true },
  { name: "Display Settings", icon: <DisplayIcon />, menu: true, tight: true },
  { name: "Grid and Snaps", icon: <GridIcon />, menu: true, tight: true },
  { name: "Viewports", icon: <ViewportsIcon />, menu: true, tight: true },
];

const transport = [
  { name: "Go to start", d: "M3 6h4v24H3zM25 6v24L7 18z" },
  { name: "Step back", d: "M20 6v24L1 18zM22 14h4v9h-4z" },
  { name: "Play", d: "M2 3l24 15L2 33z" },
  { name: "Step forward", d: "M8 6v24l19-12zM2 14h4v9H2z" },
  { name: "Go to end", d: "M21 6h4v24h-4zM3 6v24l18-12z" },
];

/* ---------- page sections ---------- */

const TopBars = () => (
  <>
    <TitleBar>
      <AppLogo />
      <TitleText>Autodesk Fusion Personal (Not for Commercial Use)</TitleText>
      <WindowButtons>
        <WindowButton aria-label="Minimize">
          <svg width="22" height="22"><path d="M1 11h20" stroke="currentColor" strokeWidth="2" /></svg>
        </WindowButton>
        <WindowButton aria-label="Maximize">
          <svg width="22" height="22">
            <rect x="2" y="2" width="18" height="18" rx="2" fill="none" stroke="currentColor" strokeWidth="2" />
          </svg>
        </WindowButton>
        <WindowButton aria-label="Close window"><Cross size={21} width={2} /></WindowButton>
      </WindowButtons>
    </TitleBar>
    <TabBar>
      <QuickActions>
        <QuickButton aria-label="Data panel"><AppsIcon /></QuickButton>
        <QuickButton aria-label="File"><FileIcon /><Caret size={14} color="#666" /></QuickButton>
        <QuickButton aria-label="Save file"><SaveIcon /></QuickButton>
        <History>
          <QuickButton aria-label="Undo"><UndoIcon /><Caret size={14} color="#666" /></QuickButton>
          <QuickButton aria-label="Redo" $faded><UndoIcon flip /><Caret size={14} color="#8f8f8f" /></QuickButton>
        </History>
      </QuickActions>
      <StubTab $wide aria-label="Home"><HomeIcon /></StubTab>
      <DocumentTab>
        <DocumentName><LockIcon />Untitled*</DocumentName>
        <QuickButton aria-label="Close document"><Cross size={18} width={3} /></QuickButton>
      </DocumentTab>
      <StubTab aria-label="New design"><PlusIcon /></StubTab>
      <AccountBar>
        <AccountButton aria-label="Extensions"><SparkleIcon /></AccountButton>
        <AccountButton aria-label="Job status"><ClockIcon /></AccountButton>
        <AccountButton aria-label="Notifications"><BellIcon /></AccountButton>
        <AccountButton aria-label="Help"><HelpIcon /></AccountButton>
        <AccountButton aria-label="Account" $last><Avatar /></AccountButton>
      </AccountBar>
    </TabBar>
  </>
);

const RibbonBar = () => (
  <Ribbon>
    <WorkspaceButton>DESIGN<Caret /></WorkspaceButton>
    <RibbonBody>
      <RibbonTabs><RibbonTab>FORM</RibbonTab></RibbonTabs>
      <Groups>
        <CreateGroup>
          <Tools>
            {createTools.map((t) => (
              <Tool key={t.name} aria-label={t.name} $active={t.active}>{t.icon}</Tool>
            ))}
          </Tools>
          <GroupLabel>CREATE<Caret /></GroupLabel>
        </CreateGroup>
        {groups.map((g) => (
          <React.Fragment key={g.name}>
            <Divider />
            <Group $end={g.end}>
              <Tool aria-label={g.name}>{g.icon}</Tool>
              <GroupLabel>{g.name}<Caret /></GroupLabel>
            </Group>
          </React.Fragment>
        ))}
        <Group $finish>
          <Tool aria-label="Finish form"><FinishIcon /></Tool>
          <GroupLabel>FINISH FORM<Caret /></GroupLabel>
        </Group>
      </Groups>
    </RibbonBody>
  </Ribbon>
);

const BrowserDock = () => (
  <LeftDock>
    <section>
      <DockHeader $open>
        <DoubleArrow />
        <DockTitle>BROWSER</DockTitle>
        <RoundSign />
      </DockHeader>
      <Tree>
        <TreeRow $root>
          <TreeToggle aria-label="Collapse"><OpenMark /></TreeToggle>
          <TreeItem $root>
            <Eye />
            <RootLabel><BodyIcon />(Unsaved)</RootLabel>
            <RadioIcon />
          </TreeItem>
        </TreeRow>
        <TreeRow>
          <TreeToggle aria-label="Expand settings"><ClosedMark /></TreeToggle>
          <TreeItem><Gear size={26} /><TreeLabel>Document Settings</TreeLabel></TreeItem>
        </TreeRow>
        <TreeRow>
          <TreeToggle aria-label="Expand views"><ClosedMark /></TreeToggle>
          <TreeItem><Folder /><TreeLabel>Named Views</TreeLabel></TreeItem>
        </TreeRow>
        <TreeRow>
          <TreeToggle aria-label="Expand origin"><ClosedMark /></TreeToggle>
          <TreeItem><Eye hidden /><Folder /><TreeLabel>Origin</TreeLabel></TreeItem>
        </TreeRow>
      </Tree>
    </section>
    <DockHeader>
      <Spacer />
      <DockTitle>COMMENTS</DockTitle>
      <RoundSign plus />
    </DockHeader>
  </LeftDock>
);

const QuadballDialog = () => (
  <Dialog onSubmit={(e) => e.preventDefault()}>
    <DialogHeader>
      <RoundSign />
      <DockTitle>QUADBALL</DockTitle>
      <DoubleArrow flip />
    </DialogHeader>
    <Fields>
      <label htmlFor="diameter">Diameter</label>
      <FieldBox><TextField id="diameter" defaultValue="80.00 mm" /></FieldBox>
      <label htmlFor="spans">Span Faces</label>
      <FieldBox>
        <TextField id="spans" defaultValue="4" />
        <TextCursor />
        <Stepper>
          <StepButton type="button" aria-label="More faces">
            <svg width="10" height="7"><path d="M0 7h10L5 0z" /></svg>
          </StepButton>
          <StepButton type="button" aria-label="Fewer faces">
            <svg width="10" height="7"><path d="M0 0h10L5 7z" /></svg>
          </StepButton>
        </Stepper>
      </FieldBox>
      <label htmlFor="symmetry">Symmetry</label>
      <FieldBox>
        <SelectIcon><NoSymmetryIcon /></SelectIcon>
        <SelectField id="symmetry"><option>None</option></SelectField>
        <SelectCaret><Caret /></SelectCaret>
      </FieldBox>
    </Fields>
    <DialogFooter>
      <InfoIcon />
      <Grow />
      <DialogButton type="submit">OK</DialogButton>
      <DialogButton type="button">Cancel</DialogButton>
    </DialogFooter>
  </Dialog>
);

const TimelineBar = () => (
  <Timeline>
    <Transport>
      {transport.map((t) => (
        <TransportButton key={t.name} aria-label={t.name}>
          <svg width="28" height="36"><path d={t.d} fill="currentColor" /></svg>
        </TransportButton>
      ))}
    </Transport>
    <svg width="60" height="68" viewBox="0 0 60 68">
      <g transform="translate(4 16) scale(.152)"><RoundedBoxDrawing /></g>
      <path d="M18 54h4v14h-4z" fill="#c8c8c8" />
      <path d="M30 4h24v7l-10 11v46h-4V22L30 11z" fill="#666" />
    </svg>
    <Grow />
    <button aria-label="Timeline settings"><Gear size={30} /></button>
  </Timeline>
);

export default function App() {
  return (
    <>
      <GlobalStyle />
      <Desktop>
        <BackWindow />
        <MiddleWindow />
        <Window>
          <TopBars />
          <RibbonBar />
          <Canvas>
            <ModelScene />
            <BrowserDock />
            <Notice>
              <WarningIcon />
              <NoticeTitle>Unsaved:</NoticeTitle>
              Changes may be lost
              <NoticeLink href="#save">Save</NoticeLink>
            </Notice>
            <CubeHolder><ViewCube /></CubeHolder>
            <QuadballDialog />
            <DimensionBar>
              <GripIcon />
              <Rule />
              <DimensionBox>
                <DimensionInput aria-label="Diameter value" defaultValue="80.00 mm" />
              </DimensionBox>
              <MoreIcon />
            </DimensionBar>
            <NavBar>
              {navTools.map((t) => (
                <NavButton key={t.name} aria-label={t.name} $plain={!t.menu} $tight={t.tight}>
                  {t.icon}
                  {t.menu && <Caret />}
                </NavButton>
              ))}
            </NavBar>
          </Canvas>
          <TimelineBar />
        </Window>
      </Desktop>
    </>
  );
}
